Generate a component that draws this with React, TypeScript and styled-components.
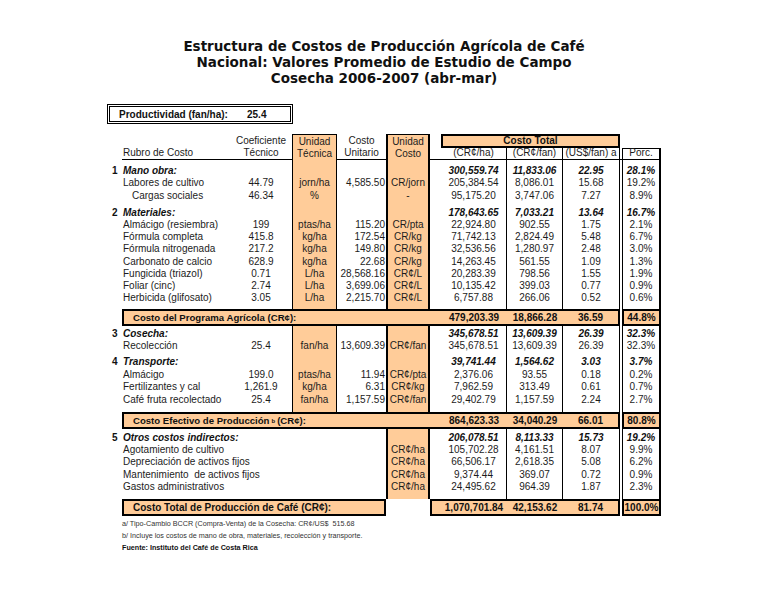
import React from "react";
import styled, { createGlobalStyle, css } from "styled-components";

const ORANGE = "#ffcc99";
// num | rubro | coef | unidad técnica | costo unitario | unidad costo | CR¢/ha | CR¢/fan | US$/fan | gap | porc
const COLS = "15px 108px 62px 45px 49px 44px 77px 56px 57px 2px 39px";

const GlobalStyle = createGlobalStyle`
  * { box-sizing: border-box; }
  html, body { margin: 0; padding: 0; background: #ffffff; }
  body {
    font-family: "Liberation Sans", Arial, sans-serif;
    color: #1c1c1c;
  }
`;

const Page = styled.div`
  width: 768px;
  height: 594px;
  overflow: hidden;
  padding-top: 38px;
`;

const Title = styled.h1`
  margin: 0;
  font-family: "DejaVu Sans", sans-serif;
  font-weight: bold;
  font-size: 13.5px;
  line-height: 16px;
  text-align: center;
  color: #111;
`;

const ProdBox = styled.div`
  margin: 18px 0 0 107px;
  width: 186px;
  height: 20px;
  border: 3px double #000;
  display: flex;
  align-items: center;
  padding-left: 9px;
  font-size: 10px;
  font-weight: bold;
  color: #111;
`;

const ProdLabel = styled.span`
  width: 128px;
`;

const Sheet = styled.div`
  margin: 10px 0 0 107px;
  width: 554px;
`;

/* ---------- header ---------- */

const HeadGrid = styled.div`
  display: grid;
  grid-template-columns: ${COLS};
  grid-template-rows: 14px 12px;
  font-size: 10px;
  line-height: 12px;
`;

const HeadCell = styled.div<{ $col: string; $left?: boolean }>`
  grid-column: ${(p) => p.$col};
  grid-row: 1 / span 2;
  display: flex;
  flex-direction: column;
  justify-content: flex-end;
  align-items: ${(p) => (p.$left ? "flex-start" : "center")};
  padding-left: ${(p) => (p.$left ? "1px" : "0")};
  border-bottom: 1px solid #000;
  white-space: nowrap;
`;

const HeadUnit = styled.div<{ $col: string; $heavy?: boolean }>`
  grid-column: ${(p) => p.$col};
  grid-row: 1 / span 2;
  display: flex;
  flex-direction: column;
  justify-content: flex-end;
  align-items: center;
  background: ${ORANGE};
  border-top: 1px solid #000;
  border-left: ${(p) => (p.$heavy ? 2 : 1)}px solid #000;
  border-right: ${(p) => (p.$heavy ? 2 : 1)}px solid #000;
  white-space: nowrap;
`;

const TotalHead = styled.div`
  grid-column: 7 / span 3;
  grid-row: 1;
  margin-left: 11px;
  background: ${ORANGE};
  border: 2px solid #000;
  display: flex;
  align-items: center;
  justify-content: center;
  font-weight: bold;
  line-height: 10px;
  color: #111;
`;

const SubHead = styled.div<{ $col: number; $first?: boolean }>`
  grid-column: ${(p) => p.$col};
  grid-row: 2;
  display: flex;
  align-items: flex-end;
  justify-content: center;
  padding-left: ${(p) => (p.$first ? 11 : 0)}px;
  border-right: 1px solid #000;
  border-bottom: 1px solid #000;
  white-space: nowrap;
`;

const GapHead = styled.div`
  grid-column: 10;
  grid-row: 2;
  border-bottom: 1px solid #000;
`;

const PorcHead = styled.div`
  grid-column: 11;
  grid-row: 2;
  display: flex;
  align-items: flex-end;
  justify-content: center;
  border: 1px solid #000;
  border-right-width: 2px;
`;

/* ---------- body rows ---------- */

const Row = styled.div<{ $h: number }>`
  display: grid;
  grid-template-columns: ${COLS};
  height: ${(p) => p.$h}px;
  font-size: 10px;
  line-height: 12px;
`;

const Cell = styled.div<{ $strong?: boolean }>`
  display: flex;
  align-items: flex-end;
  justify-content: center;
  white-space: pre;
  ${(p) =>
    p.$strong &&
    css`
      font-weight: bold;
      font-style: italic;
      color: #111;
    `}
`;

const NumCell = styled(Cell)`
  justify-content: flex-start;
  padding-left: 5px;
  font-weight: bold;
  color: #111;
`;

const LabelCell = styled(Cell)<{ $indent?: boolean }>`
  justify-content: flex-start;
  padding-left: ${(p) => (p.$indent ? 10 : 1)}px;
`;

const UnitCell = styled(Cell)<{ $off?: boolean }>`
  background: ${(p) => (p.$off ? "transparent" : ORANGE)};
  border-left: 1px solid ${(p) => (p.$off ? "transparent" : "#000")};
  border-right: 1px solid ${(p) => (p.$off ? "transparent" : "#000")};
`;

const PriceCell = styled(Cell)`
  justify-content: flex-end;
  padding-right: 1px;
`;

const CostUnitCell = styled(Cell)`
  background: ${ORANGE};
  border-left: 2px solid #000;
  border-right: 2px solid #000;
`;

const ValueCell = styled(Cell)<{ $first?: boolean }>`
  padding-left: ${(p) => (p.$first ? 11 : 0)}px;
  border-right: 1px solid #000;
`;

const PorcCell = styled(Cell)`
  border-left: 1px solid #000;
  border-right: 2px solid #000;
`;

/* ---------- summary bars ---------- */

const BarRow = styled.div`
  display: grid;
  grid-template-columns: ${COLS};
  height: 17px;
  font-size: 10px;
  font-weight: bold;
  line-height: 12px;
  color: #111;
`;

const BarLabel = styled.div<{ $span: number; $closed?: boolean; $size: number }>`
  grid-column: 2 / span ${(p) => p.$span};
  background: ${ORANGE};
  border: 2px solid #000;
  border-right: ${(p) => (p.$closed ? "2px solid #000" : "none")};
  padding-left: 9px;
  display: flex;
  align-items: center;
  font-size: ${(p) => p.$size}px;
  white-space: nowrap;
`;

const BarValue = styled.div<{ $first?: boolean; $last?: boolean; $edge?: boolean }>`
  ${(p) => p.$first && css`grid-column: 7;`}
  background: ${ORANGE};
  border-top: 2px solid #000;
  border-bottom: 2px solid #000;
  border-left: ${(p) => (p.$edge ? "2px solid #000" : "none")};
  border-right: ${(p) => (p.$last ? "2px solid #000" : "none")};
  padding-left: ${(p) => (p.$first ? (p.$edge ? 9 : 11) : 0)}px;
  display: flex;
  align-items: center;
  justify-content: center;
`;

const BarPorc = styled.div`
  grid-column: 11;
  background: ${ORANGE};
  border: 2px solid #000;
  display: flex;
  align-items: center;
  justify-content: center;
`;

const Sup = styled.sup`
  font-size: 6px;
  vertical-align: 4px;
  margin: 0 2px;
`;

const Notes = styled.div`
  margin: 2px 0 0 15px;
  font-size: 7.2px;
  line-height: 12px;
  color: #333;
`;

const Note = styled.div<{ $bold?: boolean }>`
  white-space: pre;
  font-weight: ${(p) => (p.$bold ? "bold" : "normal")};
  color: ${(p) => (p.$bold ? "#111" : "#333")};
`;

type LineProps = {
  h: number;
  num?: string;
  label?: string;
  indent?: boolean;
  coef?: string;
  ut?: string;
  cu?: string;
  uc?: string;
  vals?: string[];
  head?: boolean;
  plain?: boolean;
};

const Line = ({ h, num, label, indent, coef, ut, cu, uc, vals = [], head, plain }: LineProps) => (
  <Row $h={h}>
    <NumCell>{num}</NumCell>
    <LabelCell $indent={indent} $strong={head}>
      {label}
    </LabelCell>
    <Cell>{coef}</Cell>
    <UnitCell $off={plain}>{ut}</UnitCell>
    <PriceCell>{cu}</PriceCell>
    <CostUnitCell>{uc}</CostUnitCell>
    <ValueCell $first $strong={head}>
      {vals[0]}
    </ValueCell>
    <ValueCell $strong={head}>{vals[1]}</ValueCell>
    <ValueCell $strong={head}>{vals[2]}</ValueCell>
    <span />
    <PorcCell $strong={head}>{vals[3]}</PorcCell>
  </Row>
);

type Bar = { label: React.ReactNode; vals: string[]; size: number };

const Summary = ({ label, vals, size }: Bar) => (
  <BarRow>
    <BarLabel $span={5} $size={size}>
      {label}
    </BarLabel>
    <BarValue $first>{vals[0]}</BarValue>
    <BarValue>{vals[1]}</BarValue>
    <BarValue $last>{vals[2]}</BarValue>
    <BarPorc>{vals[3]}</BarPorc>
  </BarRow>
);

// [rubro, coef, unidad técnica, costo unitario, unidad costo, CR¢/ha, CR¢/fan, US$/fan, porc, alto]
type Item = [string, string, string, string, string, string, string, string, string, number];

const materiales: Item[] = [
  ["Almácigo (resiembra)", "199", "ptas/ha", "115.20", "CR/pta", "22,924.80", "902.55", "1.75", "2.1%", 12.25],
  ["Fórmula completa", "415.8", "kg/ha", "172.54", "CR/kg", "71,742.13", "2,824.49", "5.48", "6.7%", 12.25],
  ["Fórmula nitrogenada", "217.2", "kg/ha", "149.80", "CR/kg", "32,536.56", "1,280.97", "2.48", "3.0%", 12.25],
  ["Carbonato de calcio", "628.9", "kg/ha", "22.68", "CR/kg", "14,263.45", "561.55", "1.09", "1.3%", 12.25],
  ["Fungicida (triazol)", "0.71", "L/ha", "28,568.16", "CR¢/L", "20,283.39", "798.56", "1.55", "1.9%", 12.25],
  ["Foliar (cinc)", "2.74", "L/ha", "3,699.06", "CR¢/L", "10,135.42", "399.03", "0.77", "0.9%", 12.25],
  ["Herbicida (glifosato)", "3.05", "L/ha", "2,215.70", "CR¢/L", "6,757.88", "266.06", "0.52", "0.6%", 12.25],
];

const transporte: Item[] = [
  ["Almácigo", "199.0", "ptas/ha", "11.94", "CR¢/pta", "2,376.06", "93.55", "0.18", "0.2%", 12.5],
  ["Fertilizantes y cal", "1,261.9", "kg/ha", "6.31", "CR¢/kg", "7,962.59", "313.49", "0.61", "0.7%", 12.5],
  ["Café fruta recolectado", "25.4", "fan/ha", "1,157.59", "CR¢/fan", "29,402.79", "1,157.59", "2.24", "2.7%", 12.5],
];

const otros: Item[] = [
  ["Agotamiento de cultivo", "", "", "", "CR¢/ha", "105,702.28", "4,161.51", "8.07", "9.9%", 12],
  ["Depreciación de activos fijos", "", "", "", "CR¢/ha", "66,506.17", "2,618.35", "5.08", "6.2%", 12],
  ["Mantenimiento  de activos fijos", "", "", "", "CR¢/ha", "9,374.44", "369.07", "0.72", "0.9%", 12.5],
  ["Gastos administrativos", "", "", "", "CR¢/ha", "24,495.62", "964.39", "1.87", "2.3%", 12.5],
];

const items = (list: Item[], plain?: boolean) =>
  list.map(([label, coef, ut, cu, uc, a, b, c, d, h]) => (
    <Line key={label} h={h} label={label} coef={coef} ut={ut} cu={cu} uc={uc} vals={[a, b, c, d]} plain={plain} />
  ));

export default function App() {
  return (
    <Page>
      <GlobalStyle />
      <Title>
        Estructura de Costos de Producción Agrícola de Café
        <br />
        Nacional: Valores Promedio de Estudio de Campo
        <br />
        Cosecha 2006-2007 (abr-mar)
      </Title>

      <ProdBox>
        <ProdLabel>Productividad (fan/ha):</ProdLabel>
        <span>25.4</span>
      </ProdBox>

      <Sheet>
        <HeadGrid>
          <HeadCell $col="2" $left>
            Rubro de Costo
          </HeadCell>
          <HeadCell $col="3">
            <span>Coeficiente</span>
            <span>Técnico</span>
          </HeadCell>
          <HeadUnit $col="4">
            <span>Unidad</span>
            <span>Técnica</span>
          </HeadUnit>
          <HeadCell $col="5">
            <span>Costo</span>
            <span>Unitario</span>
          </HeadCell>
          <HeadUnit $col="6" $heavy>
            <span>Unidad</span>
            <span>Costo</span>
          </HeadUnit>
          <TotalHead>Costo Total</TotalHead>
          <SubHead $col={7} $first>
            (CR¢/ha)
          </SubHead>
          <SubHead $col={8}>(CR¢/fan)</SubHead>
          <SubHead $col={9}>(US$/fan) a</SubHead>
          <GapHead />
          <PorcHead>Porc.</PorcHead>
        </HeadGrid>

        <Line h={17} num="1" label="Mano obra:" head vals={["300,559.74", "11,833.06", "22.95", "28.1%"]} />
        <Line
          h={12.25}
          label="Labores de cultivo"
          coef="44.79"
          ut="jorn/ha"
          cu="4,585.50"
          uc="CR/jorn"
          vals={["205,384.54", "8,086.01", "15.68", "19.2%"]}
        />
        <Line
          h={12.25}
          label="Cargas sociales"
          indent
          coef="46.34"
          ut="%"
          uc="-"
          vals={["95,175.20", "3,747.06", "7.27", "8.9%"]}
        />
        <Line h={17} num="2" label="Materiales:" head vals={["178,643.65", "7,033.21", "13.64", "16.7%"]} />
        {items(materiales)}
        <Line h={4.75} />
        <Summary
          size={9.6}
          label="Costo del Programa Agrícola (CR¢):"
          vals={["479,203.39", "18,866.28", "36.59", "44.8%"]}
        />

        <Line h={14} num="3" label="Cosecha:" head vals={["345,678.51", "13,609.39", "26.39", "32.3%"]} />
        <Line
          h={12}
          label="Recolección"
          coef="25.4"
          ut="fan/ha"
          cu="13,609.39"
          uc="CR¢/fan"
          vals={["345,678.51", "13,609.39", "26.39", "32.3%"]}
        />
        <Line h={16} num="4" label="Transporte:" head vals={["39,741.44", "1,564.62", "3.03", "3.7%"]} />
        {items(transporte)}
        <Line h={6.5} />
        <Summary
          size={9.6}
          label={
            <>
              Costo Efectivo de Producción<Sup>b</Sup>(CR¢):
            </>
          }
          vals={["864,623.33", "34,040.29", "66.01", "80.8%"]}
        />

        <Line h={15} num="5" label="Otros costos indirectos:" head plain vals={["206,078.51", "8,113.33", "15.73", "19.2%"]} />
        {items(otros, true)}
        <Line h={6} plain />
        <BarRow>
          <BarLabel $span={4} $closed $size={10}>
            Costo Total de Producción de Café (CR¢):
          </BarLabel>
          <BarValue $first $edge>
            1,070,701.84
          </BarValue>
          <BarValue>42,153.62</BarValue>
          <BarValue $last>81.74</BarValue>
          <BarPorc>100.0%</BarPorc>
        </BarRow>

        <Notes>
          <Note>a/ Tipo-Cambio BCCR (Compra-Venta) de la Cosecha: CR¢/US$  515.68</Note>
          <Note>b/ Incluye los costos de mano de obra, materiales, recolección y transporte.</Note>
          <Note $bold>Fuente: Instituto del Café de Costa Rica</Note>
        </Notes>
      </Sheet>
    </Page>
  );
}
